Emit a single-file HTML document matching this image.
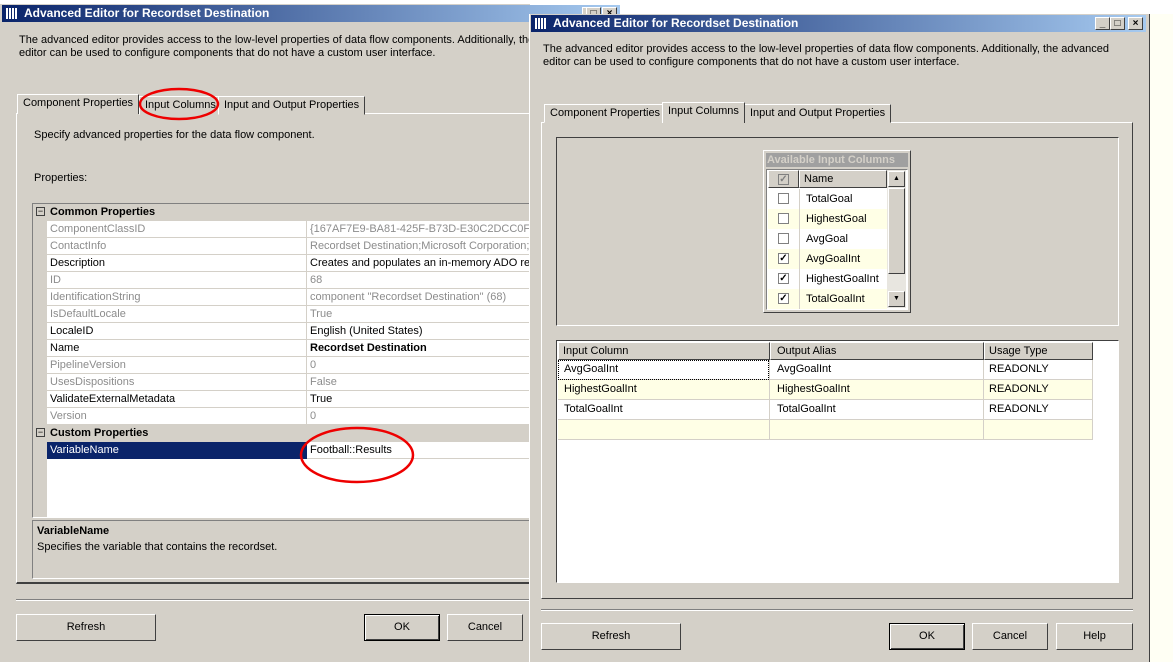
<!DOCTYPE html>
<html><head><meta charset="utf-8"><style>
*{margin:0;padding:0;box-sizing:border-box}
body{width:1173px;height:662px;position:relative;overflow:hidden;background:#fff;font-family:"Liberation Sans",Tahoma,sans-serif;font-size:11px;color:#000}
.a{position:absolute;white-space:nowrap}
.win{background:#d4d0c8}
.title{background:linear-gradient(90deg,#0a246a,#a6caf0);color:#fff;font-weight:bold;font-size:12px;height:17px;line-height:17px;padding-left:22px}
.ico{position:absolute;left:4px;top:3px;width:11px;height:11px;background:repeating-linear-gradient(90deg,#fff 0 2px,#0a246a 2px 3px)}
.tb{position:absolute;width:15px;height:13px;background:#d4d0c8;border:1px solid;border-color:#fff #404040 #404040 #fff;font-size:10px;line-height:11px;text-align:center;color:#000;font-weight:bold}
.sunk{border:1px solid;border-color:#808080 #fff #fff #808080}
.rais{border:1px solid;border-color:#fff #404040 #404040 #fff}
.btn{position:absolute;background:#d4d0c8;border:1px solid;border-color:#fff #404040 #404040 #fff;text-align:center;font-size:11px}
.def{border:1px solid #000;box-shadow:inset 1px 1px #fff,inset -1px -1px #404040}
.tab{position:absolute;height:19px;line-height:17px;padding:0 5px;border:1px solid;border-color:#fff #404040 transparent #fff;background:#d4d0c8}
.row{position:absolute;left:47px;width:482px;height:17px;border-bottom:1px solid #d4d0c8;background:#fff;overflow:hidden}
.row span{position:absolute;top:2px;white-space:nowrap}
.g{color:#8c8c8c}
.cb{position:absolute;width:11px;height:11px;border:1px solid #808080;background:#fff;font-size:10px;line-height:9px;text-align:center;font-weight:bold}
</style></head><body>

<!-- LEFT WINDOW -->
<div class="a win" style="left:0;top:4px;width:530px;height:658px;"></div>
<div class="a title" style="left:2px;top:5px;width:618px;">Advanced Editor for Recordset Destination<div class="ico"></div></div>
<div class="tb" style="left:582px;top:7px">_</div><div class="tb" style="left:586px;top:7px">□</div><div class="tb" style="left:602px;top:7px">×</div>
<div class="a" style="left:19px;top:34px;line-height:13px">The advanced editor provides access to the low-level properties of data flow components. Additionally, the<br>editor can be used to configure components that do not have a custom user interface.</div>

<div class="a" style="left:16px;top:113px;width:520px;height:471px;border-left:1px solid #fff;border-top:1px solid #fff;border-bottom:2px solid #404040"></div>
<div class="tab" style="left:17px;top:94px;height:20px;border-bottom:none;z-index:2">Component Properties</div>
<div class="tab" style="left:139px;top:96px;">Input Columns</div>
<div class="tab" style="left:218px;top:96px;">Input and Output Properties</div>
<div class="a" style="left:34px;top:129px">Specify advanced properties for the data flow component.</div>
<div class="a" style="left:34px;top:172px">Properties:</div>

<div class="a sunk" style="left:32px;top:203px;width:500px;height:315px;background:#fff"></div>
<div class="a" style="left:33px;top:204px;width:14px;height:313px;background:#d4d0c8"></div>
<div class="a" style="left:33px;top:204px;width:498px;height:17px;background:#d4d0c8;font-weight:bold;font-size:11px"><span class="a" style="left:3px;top:3px;width:9px;height:9px;border:1px solid #404040;font-size:9px;line-height:6px;text-align:center;font-weight:normal">−</span><span class="a" style="left:17px;top:2px">Common Properties</span></div>
<div class="row" style="top:221px"><span class="g" style="left:3px">ComponentClassID</span><span class="g" style="left:263px">{167AF7E9-BA81-425F-B73D-E30C2DCC0F09</span></div>
<div class="row" style="top:238px"><span class="g" style="left:3px">ContactInfo</span><span class="g" style="left:263px">Recordset Destination;Microsoft Corporation;</span></div>
<div class="row" style="top:255px"><span style="left:3px">Description</span><span style="left:263px">Creates and populates an in-memory ADO rec</span></div>
<div class="row" style="top:272px"><span class="g" style="left:3px">ID</span><span class="g" style="left:263px">68</span></div>
<div class="row" style="top:289px"><span class="g" style="left:3px">IdentificationString</span><span class="g" style="left:263px">component "Recordset Destination" (68)</span></div>
<div class="row" style="top:306px"><span class="g" style="left:3px">IsDefaultLocale</span><span class="g" style="left:263px">True</span></div>
<div class="row" style="top:323px"><span style="left:3px">LocaleID</span><span style="left:263px">English (United States)</span></div>
<div class="row" style="top:340px"><span style="left:3px">Name</span><span style="left:263px;font-weight:bold">Recordset Destination</span></div>
<div class="row" style="top:357px"><span class="g" style="left:3px">PipelineVersion</span><span class="g" style="left:263px">0</span></div>
<div class="row" style="top:374px"><span class="g" style="left:3px">UsesDispositions</span><span class="g" style="left:263px">False</span></div>
<div class="row" style="top:391px"><span style="left:3px">ValidateExternalMetadata</span><span style="left:263px">True</span></div>
<div class="row" style="top:408px"><span class="g" style="left:3px">Version</span><span class="g" style="left:263px">0</span></div>
<div class="a" style="left:306px;top:221px;width:1px;height:204px;background:#d4d0c8"></div>
<div class="a" style="left:33px;top:425px;width:498px;height:17px;background:#d4d0c8;font-weight:bold"><span class="a" style="left:3px;top:3px;width:9px;height:9px;border:1px solid #404040;font-size:9px;line-height:6px;text-align:center;font-weight:normal">−</span><span class="a" style="left:17px;top:2px">Custom Properties</span></div>
<div class="a" style="left:47px;top:442px;width:260px;height:17px;background:#0a246a;color:#fff;padding:2px 3px">VariableName</div>
<div class="a" style="left:307px;top:442px;width:224px;height:17px;background:#fff;border-bottom:1px solid #d4d0c8;padding:2px 3px">Football::Results</div>

<div class="a sunk" style="left:32px;top:520px;width:500px;height:59px"></div>
<div class="a" style="left:37px;top:525px;font-weight:bold">VariableName</div>
<div class="a" style="left:37px;top:541px">Specifies the variable that contains the recordset.</div>
<div class="a" style="left:16px;top:599px;width:514px;height:2px;border-top:1px solid #808080;border-bottom:1px solid #fff"></div>
<div class="btn" style="left:16px;top:614px;width:140px;height:27px;line-height:25px">Refresh</div>
<div class="btn def" style="left:364px;top:614px;width:76px;height:27px;line-height:25px">OK</div>
<div class="btn" style="left:447px;top:614px;width:76px;height:27px;line-height:25px">Cancel</div>

<!-- RIGHT WINDOW -->
<div class="a win" style="left:529px;top:14px;width:621px;height:648px;border-left:1px solid #fff;border-right:1px solid #404040"></div>
<div class="a" style="left:1150px;top:14px;width:23px;height:648px;background:#fffff4"></div>
<div class="a title" style="left:531px;top:15px;width:615px;">Advanced Editor for Recordset Destination<div class="ico"></div></div>
<div class="tb" style="left:1095px;top:17px">_</div><div class="tb" style="left:1110px;top:17px">□</div><div class="tb" style="left:1128px;top:17px">×</div>
<div class="a" style="left:543px;top:43px;line-height:13px">The advanced editor provides access to the low-level properties of data flow components. Additionally, the advanced<br>editor can be used to configure components that do not have a custom user interface.</div>

<div class="a" style="left:541px;top:122px;width:592px;height:477px;border:1px solid;border-color:#fff #404040 #404040 #fff"></div>
<div class="tab" style="left:544px;top:104px;">Component Properties</div>
<div class="tab" style="left:662px;top:102px;height:21px;border-bottom:none;z-index:2">Input Columns</div>
<div class="tab" style="left:744px;top:104px;">Input and Output Properties</div>

<div class="a" style="left:556px;top:137px;width:563px;height:189px;border:1px solid;border-color:#404040 #fff #fff #404040"></div>
<div class="a rais" style="left:763px;top:150px;width:148px;height:163px;background:#d4d0c8"></div>
<div class="a" style="left:766px;top:153px;width:142px;height:14px;background:#a0a0a0;color:#d4d0c8;font-weight:bold;line-height:14px;padding-left:1px">Available Input Columns</div>
<div class="a sunk" style="left:766px;top:169px;width:142px;height:141px;background:#fff"></div>
<div class="a rais" style="left:768px;top:170px;width:31px;height:18px;background:#d4d0c8"></div>
<div class="cb" style="left:778px;top:174px;background:#d4d0c8;color:#808080">✓</div>
<div class="a rais" style="left:799px;top:170px;width:88px;height:18px;background:#d4d0c8;padding:2px 4px">Name</div>
<div class="a" style="left:887px;top:170px;width:19px;height:138px;background:#e8e6e0"></div>
<div class="btn" style="left:888px;top:171px;width:17px;height:16px;font-size:7px;line-height:14px">▲</div>
<div class="btn" style="left:888px;top:188px;width:17px;height:86px"></div>
<div class="btn" style="left:888px;top:291px;width:17px;height:16px;font-size:7px;line-height:14px">▼</div>
<div class="a" style="left:768px;top:189px;width:119px;height:120px;background:repeating-linear-gradient(180deg,#fff 0 20px,#ffffe6 20px 40px)"></div>
<div class="a" style="left:799px;top:189px;width:1px;height:120px;background:#d4d0c8"></div>
<div class="a" style="left:806px;top:189px;line-height:20px">TotalGoal<br>HighestGoal<br>AvgGoal<br>AvgGoalInt<br>HighestGoalInt<br>TotalGoalInt</div>
<div class="cb" style="left:778px;top:193px"></div>
<div class="cb" style="left:778px;top:213px"></div>
<div class="cb" style="left:778px;top:233px"></div>
<div class="cb" style="left:778px;top:253px">✓</div>
<div class="cb" style="left:778px;top:273px">✓</div>
<div class="cb" style="left:778px;top:293px">✓</div>

<div class="a" style="left:556px;top:340px;width:563px;height:243px;background:#fff;border:1px solid;border-color:#404040 #fff #fff #404040"></div>
<div class="a rais" style="left:558px;top:342px;width:212px;height:18px;background:#d4d0c8;padding:2px 4px">Input Column</div>
<div class="a rais" style="left:770px;top:342px;width:214px;height:18px;background:#d4d0c8;padding:2px 6px">Output Alias</div>
<div class="a rais" style="left:984px;top:342px;width:109px;height:18px;background:#d4d0c8;padding:2px 4px">Usage Type</div>
<div class="a" style="left:558px;top:360px;width:535px;height:80px;background:repeating-linear-gradient(180deg,#fff 0 19px,#d4d0c8 19px 20px,#ffffe6 20px 39px,#d4d0c8 39px 40px)"></div>
<div class="a" style="left:769px;top:360px;width:1px;height:80px;background:#d4d0c8"></div>
<div class="a" style="left:983px;top:360px;width:1px;height:80px;background:#d4d0c8"></div>
<div class="a" style="left:1092px;top:360px;width:1px;height:80px;background:#d4d0c8"></div>
<div class="a" style="left:558px;top:360px;width:211px;height:20px;border:1px dotted #000"></div>
<div class="a" style="left:564px;top:359px;line-height:20px">AvgGoalInt<br>HighestGoalInt<br>TotalGoalInt</div>
<div class="a" style="left:777px;top:359px;line-height:20px">AvgGoalInt<br>HighestGoalInt<br>TotalGoalInt</div>
<div class="a" style="left:989px;top:359px;line-height:20px">READONLY<br>READONLY<br>READONLY</div>

<div class="a" style="left:541px;top:609px;width:592px;height:2px;border-top:1px solid #808080;border-bottom:1px solid #fff"></div>
<div class="btn" style="left:541px;top:623px;width:140px;height:27px;line-height:25px">Refresh</div>
<div class="btn def" style="left:889px;top:623px;width:76px;height:27px;line-height:25px">OK</div>
<div class="btn" style="left:972px;top:623px;width:76px;height:27px;line-height:25px">Cancel</div>
<div class="btn" style="left:1056px;top:623px;width:77px;height:27px;line-height:25px">Help</div>

<!-- red ellipses -->
<svg class="a" style="left:0;top:0" width="1173" height="662"><ellipse cx="179" cy="104" rx="39" ry="15" fill="none" stroke="#e00" stroke-width="2.5"/><ellipse cx="357" cy="455" rx="56" ry="27" fill="none" stroke="#e00" stroke-width="2.5"/></svg>
</body></html>
